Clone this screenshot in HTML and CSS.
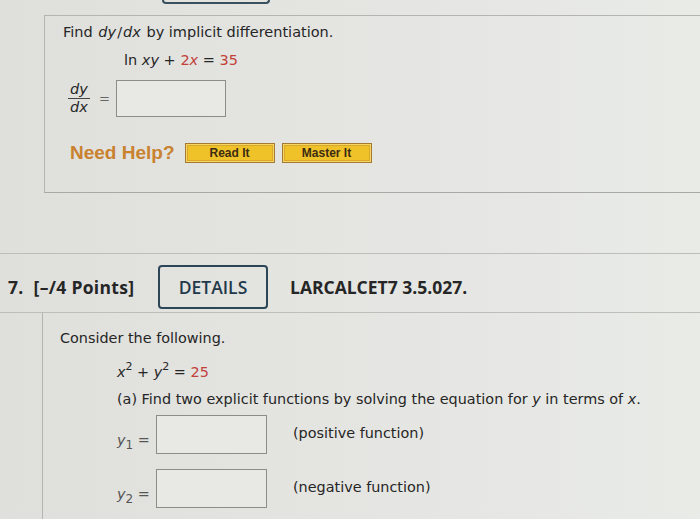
FILE: index.html
```html
<!DOCTYPE html>
<html>
<head>
<meta charset="utf-8">
<link rel="stylesheet" href="styles.css">
</head>
<body>
<div class="page">
  <div class="top-strip">
    <div class="prev-details"></div>
  </div>
  <div class="panel panel-one">
    <p class="prompt">Find <i>dy</i>/<i>dx</i> by implicit differentiation.</p>
    <p class="equation">ln <i>xy</i> + <span class="red">2<i>x</i></span> = <span class="red">35</span></p>
    <div class="answer-row">
      <span class="frac"><span class="num"><i>dy</i></span><span class="den"><i>dx</i></span></span>
      <span class="eq">=</span>
      <span class="box box-wide"></span>
    </div>
    <div class="help-row">
      <span class="need-help">Need Help?</span>
      <span class="help-btn">Read It</span>
      <span class="help-btn">Master It</span>
    </div>
  </div>
  <div class="gap"></div>
  <div class="q-header">
    <span class="q-num"><span class="q-n">7.</span>[–/4 Points]</span>
    <span class="details">DETAILS</span>
    <span class="q-code">LARCALCET7 3.5.027.</span>
  </div>
  <div class="panel panel-two">
    <p class="prompt">Consider the following.</p>
    <p class="equation2"><i>x</i><sup>2</sup> + <i>y</i><sup>2</sup> = <span class="red">25</span></p>
    <p class="part">(a) Find two explicit functions by solving the equation for <i>y</i> in terms of <i>x</i>.</p>
    <div class="fn-row">
      <span class="ylabel"><i>y</i><sub>1</sub> =</span>
      <span class="box box-fn"></span>
      <span class="fn-note">(positive function)</span>
    </div>
    <div class="fn-row">
      <span class="ylabel"><i>y</i><sub>2</sub> =</span>
      <span class="box box-fn"></span>
      <span class="fn-note">(negative function)</span>
    </div>
  </div>
</div>
</body>
</html>
```

FILE: styles.css
```css
html, body {
  margin: 0;
  padding: 0;
}
body {
  width: 700px;
  height: 519px;
  overflow: hidden;
  background: linear-gradient(90deg, #dfdfdc 0%, #e4e4e1 45%, #e9ebe7 100%);
  font-family: "DejaVu Sans", Verdana, sans-serif;
  color: #262626;
}
p { margin: 0; }
.page {
  display: flex;
  flex-direction: column;
}
.top-strip {
  height: 15px;
}
.prev-details {
  margin-left: 162px;
  width: 104px;
  height: 2px;
  border: 2px solid #3a5060;
  border-top: none;
  border-radius: 0 0 4px 4px;
}
.panel {
  border-top: 1px solid #b4b4b0;
  border-left: 1px solid #b4b4b0;
  box-sizing: border-box;
}
.panel-one {
  margin-left: 44px;
  height: 178px;
  border-bottom: 1px solid #a8a8a4;
  padding: 6px 0 0 18px;
  font-size: 14.5px;
}
.prompt {
  line-height: 20px;
  font-size: 14.5px;
}
.prompt i { padding: 0 1px; }
.equation {
  margin: 8px 0 0 61px;
  line-height: 20px;
  font-size: 14.5px;
}
.red { color: #c2403a; }
.answer-row {
  display: flex;
  align-items: center;
  margin: 10px 0 0 4px;
  height: 37px;
}
.frac {
  display: inline-flex;
  flex-direction: column;
  align-items: center;
  font-size: 14.5px;
  line-height: 15px;
  width: 24px;
}
.frac .num {
  border-bottom: 1px solid #444;
  padding: 0 2px 1px;
}
.frac .den { padding-top: 1px; }
.eq {
  margin-left: 8px;
  color: #666;
  font-size: 13px;
}
.box {
  display: inline-block;
  box-sizing: border-box;
  border: 1px solid #8c8c88;
  background: #e8e8e5;
}
.box-wide {
  width: 110px;
  height: 37px;
  margin-left: 6px;
}
.help-row {
  display: flex;
  align-items: center;
  margin: 26px 0 0 7px;
  height: 20px;
}
.need-help {
  font-family: "Liberation Sans", Arial, sans-serif;
  font-weight: bold;
  font-size: 19px;
  color: #c9822f;
  margin-right: 10px;
}
.help-btn {
  display: inline-flex;
  align-items: center;
  justify-content: center;
  box-sizing: border-box;
  width: 90px;
  height: 20px;
  margin-right: 7px;
  background: #f0c229;
  border: 1px solid #a47a32;
  box-shadow: inset 0 0 0 1px #f6d766, inset 0 0 0 2px #d9a72a;
  font-family: "Liberation Sans", Arial, sans-serif;
  font-weight: bold;
  font-size: 12px;
  color: #3b2c12;
}
.gap {
  height: 60px;
}
.q-header {
  display: flex;
  align-items: center;
  height: 60px;
  box-sizing: border-box;
  border-top: 1px solid #bdbdba;
  border-bottom: 1px solid #bdbdba;
  padding: 7px 0 0 8px;
  font-family: "Open Sans", sans-serif;
  font-size: 17.5px;
  font-weight: bold;
  color: #262626;
}
.q-num {
  width: 150px;
  letter-spacing: 0.3px;
}
.q-n {
  margin-right: 10px;
}
.details {
  display: inline-flex;
  align-items: center;
  justify-content: center;
  box-sizing: border-box;
  width: 110px;
  height: 44px;
  border: 2px solid #2c4658;
  border-radius: 4px;
  font-weight: 600;
  color: #22394b;
}
.q-code {
  margin-left: 22px;
}
.panel-two {
  margin-left: 42px;
  border-top: none;
  padding: 15px 0 0 17px;
  height: 206px;
  font-size: 14.4px;
}
.panel-two .prompt { font-size: 14.4px; }
.equation2 {
  margin: 13px 0 0 57px;
  line-height: 22px;
  font-size: 14.4px;
}
.equation2 sup {
  font-size: 11px;
  line-height: 0;
  vertical-align: 7px;
}
.part {
  margin: 6px 0 0 57px;
  line-height: 20px;
  font-size: 14.4px;
}
.fn-row {
  display: flex;
  align-items: center;
  margin: 6px 0 0 57px;
  height: 39px;
  font-size: 14.4px;
}
.fn-row + .fn-row {
  margin-top: 15px;
}
.ylabel {
  width: 39px;
  color: #555;
  margin-top: 10px;
}
.ylabel sub {
  font-size: 12px;
  line-height: 0;
  vertical-align: -4px;
}
.box-fn {
  width: 111px;
  height: 39px;
}
.fn-note {
  margin-left: 26px;
  margin-top: -4px;
}
```
